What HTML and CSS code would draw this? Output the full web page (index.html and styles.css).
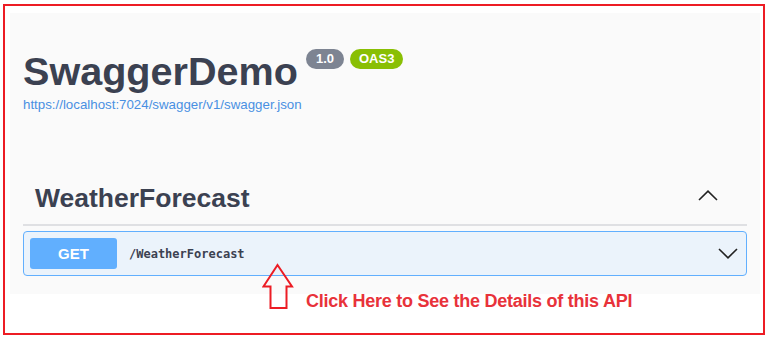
FILE: index.html
```html
<!DOCTYPE html>
<html lang="en">
<head>
<meta charset="utf-8">
<title>SwaggerDemo</title>
<link rel="stylesheet" href="styles.css">
</head>
<body>
<div class="frame">
  <div class="panel">
    <div class="info">
      <div class="title-row">
        <h1 class="title">SwaggerDemo</h1>
        <div class="badges">
          <span class="badge badge-version">1.0</span>
          <span class="badge badge-oas">OAS3</span>
        </div>
      </div>
      <a class="spec-link" href="#">https://localhost:7024/swagger/v1/swagger.json</a>
    </div>

    <div class="tag">
      <div class="tag-header">
        <h3 class="tag-name">WeatherForecast</h3>
        <svg class="caret caret-up" width="20" height="11" viewBox="0 0 20 11"><polyline points="1,10 10,1.2 19,10" fill="none" stroke="#222" stroke-width="1.6"/></svg>
      </div>
      <div class="op">
        <span class="method">GET</span>
        <span class="path">/WeatherForecast</span>
        <svg class="caret caret-down" width="20" height="11" viewBox="0 0 20 11"><polyline points="1,1 10,9.8 19,1" fill="none" stroke="#222" stroke-width="1.6"/></svg>
      </div>
    </div>
  </div>

  <svg class="note-arrow" width="32" height="47" viewBox="0 0 32 47"><polygon points="15.5,2 1.5,23.5 8.5,23.5 8.5,45 24.5,45 24.5,23.5 30,23.5" fill="none" stroke="#ec1c24" stroke-width="2"/></svg>
  <div class="note-text">Click Here to See the Details of this API</div>
</div>
</body>
</html>
```

FILE: styles.css
```css
html, body {
  margin: 0;
  padding: 0;
  background: #ffffff;
}

body {
  font-family: "Liberation Sans", Arial, sans-serif;
  color: #3b4151;
}

.frame {
  position: relative;
  box-sizing: border-box;
  margin: 4px 3px 2px 3px;
  height: 331px;
  border: 2px solid #ed1c24;
  padding: 7px 3px 0 5px;
}

.panel {
  background: #fafafa;
  height: 281px;
  padding: 0 13px;
  box-sizing: border-box;
}

.info {
  padding-top: 39px;
}

.title-row {
  display: flex;
  align-items: flex-start;
}

.title {
  margin: 0;
  font-size: 39.6px;
  line-height: 39px;
  font-weight: 700;
  color: #3b4151;
}

.badges {
  display: flex;
  gap: 6px;
  margin-left: 8px;
  margin-top: -3px;
}

.badge {
  display: inline-block;
  height: 20px;
  line-height: 20px;
  padding: 0 9px;
  border-radius: 10px;
  font-size: 13px;
  font-weight: 700;
  color: #ffffff;
}

.badge-version {
  background: #7d8492;
  padding: 0 10px;
}

.badge-oas {
  background: #89bf04;
}

.spec-link {
  display: block;
  margin-top: 6px;
  font-size: 13.3px;
  line-height: 15px;
  color: #4990e2;
  text-decoration: none;
}

.tag {
  margin-top: 70px;
}

.tag-header {
  display: flex;
  align-items: center;
  justify-content: space-between;
  padding-bottom: 10px;
  border-bottom: 2px solid #dfe0e3;
}

.tag-name {
  margin: 0;
  padding-left: 12px;
  font-size: 26.5px;
  line-height: 32px;
  font-weight: 700;
  color: #3b4151;
}

.caret {
  display: block;
  flex: none;
}

.caret-up {
  margin-right: 29px;
  margin-bottom: 6px;
}

.op {
  display: flex;
  align-items: center;
  margin-top: 5px;
  padding: 6px;
  border: 1px solid #61affe;
  border-radius: 4px;
  background: #ebf3fb;
}

.method {
  width: 87px;
  height: 31px;
  line-height: 31px;
  text-align: center;
  border-radius: 3px;
  background: #61affe;
  color: #ffffff;
  font-size: 15px;
  font-weight: 700;
}

.path {
  flex: 1;
  margin-left: 12px;
  font-family: "DejaVu Sans Mono", "Liberation Mono", monospace;
  font-size: 12px;
  font-weight: 700;
  color: #3b4151;
}

.caret-down {
  margin-right: 2px;
}

.note-arrow {
  position: absolute;
  left: 257px;
  top: 257px;
}

.note-text {
  position: absolute;
  left: 301px;
  top: 285px;
  font-size: 18px;
  line-height: 20px;
  font-weight: 700;
  letter-spacing: -0.25px;
  color: #e8323a;
  white-space: nowrap;
}
```
